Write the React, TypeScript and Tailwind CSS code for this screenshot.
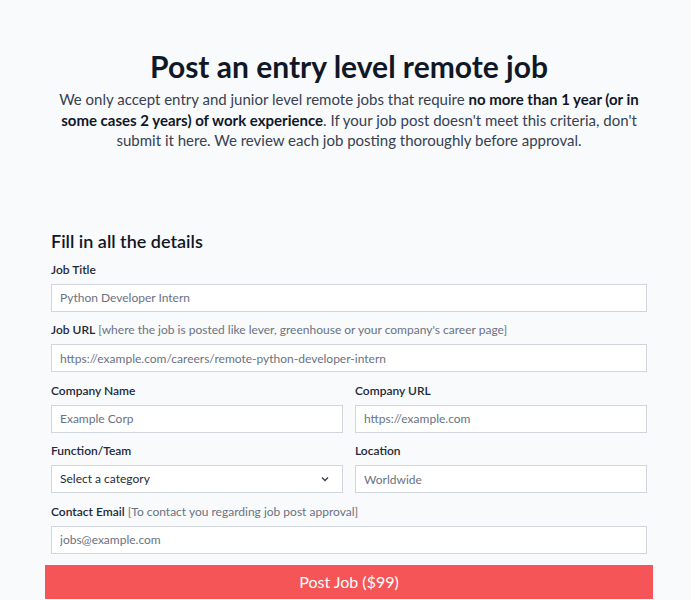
import React from 'react';

const font = { fontFamily: 'Lato, "Noto Sans", sans-serif' };

function Field({ label, note, placeholder }: { label: string; note?: string; placeholder: string }) {
  return (
    <div className="flex flex-col">
      <label className="text-[12px] leading-[18px] text-gray-800 font-semibold">
        {label}
        {note && <span className="font-normal text-gray-500"> {note}</span>}
      </label>
      <input
        className="mt-[5px] h-[28px] w-full border border-gray-300 bg-white px-[8px] text-[12px] text-gray-800 placeholder:text-gray-500 outline-none"
        placeholder={placeholder}
      />
    </div>
  );
}

export default function App() {
  return (
    <div className="min-h-[600px] bg-gray-50" style={font}>
      <div className="ml-[45px] w-[608px] pt-[46px]">
        <h1 className="text-center text-[30px] leading-[40px] font-bold text-gray-900">Post an entry level remote job</h1>
        <p className="mx-auto mt-[3px] w-[580px] text-center text-[15px] leading-[20.5px] text-gray-700">
          We only accept entry and junior level remote jobs that require{' '}
          <b className="font-bold text-gray-900">no more than 1 year (or in some cases 2 years) of work experience</b>. If your job
          post doesn't meet this criteria, don't submit it here. We review each job posting thoroughly before approval.
        </p>

        <div className="mt-[77px] px-[6px]">
          <h2 className="text-[18px] leading-[26px] font-semibold text-gray-900">Fill in all the details</h2>
          <div className="mt-[7px] flex flex-col gap-[9.5px]">
            <Field label="Job Title" placeholder="Python Developer Intern" />
            <Field
              label="Job URL"
              note="[where the job is posted like lever, greenhouse or your company's career page]"
              placeholder="https://example.com/careers/remote-python-developer-intern"
            />
            <div className="grid grid-cols-2 gap-x-[12px]">
              <Field label="Company Name" placeholder="Example Corp" />
              <Field label="Company URL" placeholder="https://example.com" />
            </div>
            <div className="grid grid-cols-2 gap-x-[12px]">
              <div className="flex flex-col">
                <label className="text-[12px] leading-[18px] text-gray-800 font-semibold">Function/Team</label>
                <div className="mt-[5px] flex h-[28px] items-center justify-between border border-gray-300 bg-white px-[8px] text-[12px] text-gray-800">
                  <span>Select a category</span>
                  <svg width="10" height="10" viewBox="0 0 10 10" fill="none" stroke="#374151" strokeWidth="1.4" className="mr-[4px]">
                    <path d="M2 3.5 L5 6.5 L8 3.5" />
                  </svg>
                </div>
              </div>
              <Field label="Location" placeholder="Worldwide" />
            </div>
            <Field label="Contact Email" note="[To contact you regarding job post approval]" placeholder="jobs@example.com" />
          </div>
        </div>
        <button className="mt-[11px] h-[34px] w-full bg-[#f55556] text-[16px] text-white">Post Job ($99)</button>
      </div>
    </div>
  );
}
